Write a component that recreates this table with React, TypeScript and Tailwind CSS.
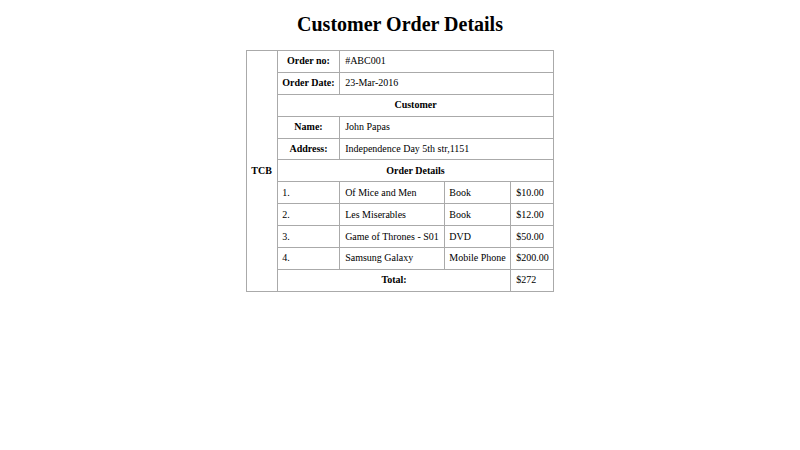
import React from "react";

const td = "border border-[#aaaaaa] px-[4.75px] h-[21.9px] p-0 align-middle whitespace-nowrap text-left";
const th = "border border-[#aaaaaa] px-[4.75px] h-[21.9px] p-0 align-middle font-bold text-center whitespace-nowrap";

export default function App() {
  const items = [
    ["1.", "Of Mice and Men", "Book", "$10.00"],
    ["2.", "Les Miserables", "Book", "$12.00"],
    ["3.", "Game of Thrones - S01", "DVD", "$50.00"],
    ["4.", "Samsung Galaxy", "Mobile Phone", "$200.00"],
  ];
  return (
    <div className="w-[800px] h-[450px] bg-white text-black" style={{ fontFamily: '"Liberation Serif", serif' }}>
      <h1 className="text-[20px] font-bold text-center leading-[24px] pt-[12px] mb-[14px]">Customer Order Details</h1>
      <table className="mx-auto border-collapse text-[10px] leading-[12px]">
        <tbody>
          <tr>
            <th rowSpan={11} className={th}>TCB</th>
            <th className={th}>Order no:</th>
            <td colSpan={3} className={td}>#ABC001</td>
          </tr>
          <tr>
            <th className={th}>Order Date:</th>
            <td colSpan={3} className={td}>23-Mar-2016</td>
          </tr>
          <tr>
            <th colSpan={4} className={th}>Customer</th>
          </tr>
          <tr>
            <th className={th}>Name:</th>
            <td colSpan={3} className={td}>John Papas</td>
          </tr>
          <tr>
            <th className={th}>Address:</th>
            <td colSpan={3} className={td}>Independence Day 5th str,1151</td>
          </tr>
          <tr>
            <th colSpan={4} className={th}>Order Details</th>
          </tr>
          {items.map((r) => (
            <tr key={r[0]}>
              {r.map((c, i) => (
                <td key={i} className={td}>{c}</td>
              ))}
            </tr>
          ))}
          <tr>
            <th colSpan={3} className={th}>Total:</th>
            <td className={td}>$272</td>
          </tr>
        </tbody>
      </table>
    </div>
  );
}
